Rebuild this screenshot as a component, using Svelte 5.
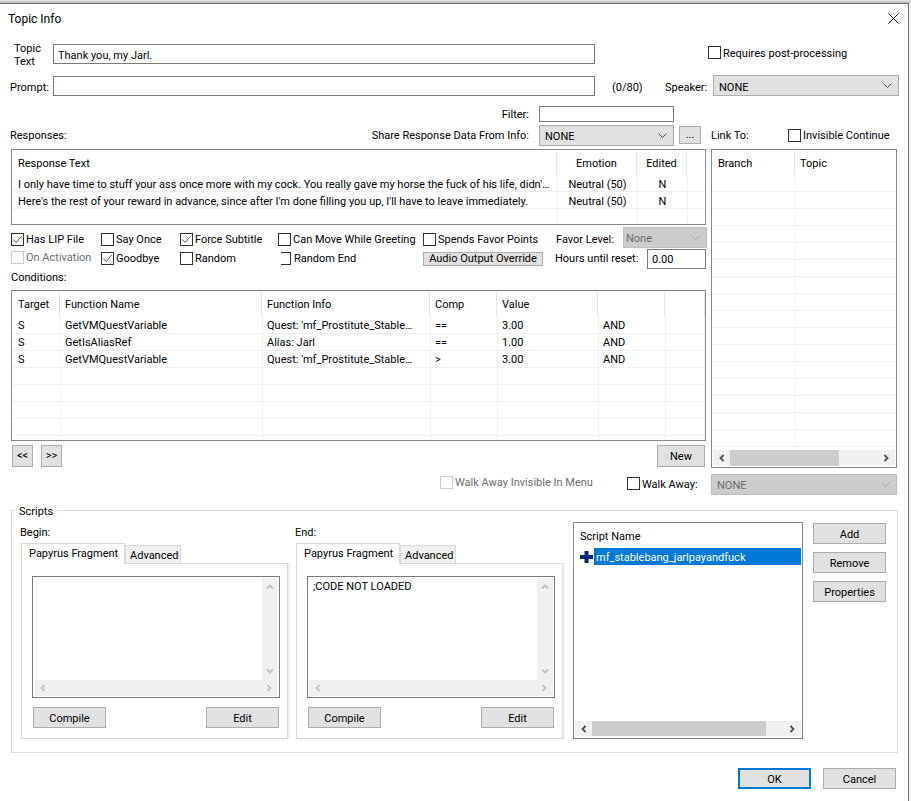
<script>
  const respRows = [
    ["I only have time to stuff your ass once more with my cock. You really gave my horse the fuck of his life, didn'…", "Neutral (50)", "N"],
    ["Here's the rest of your reward in advance, since after I'm done filling you up, I'll have to leave immediately.", "Neutral (50)", "N"],
    ["", "", ""]
  ];
  const condHead = ["Target", "Function Name", "Function Info", "Comp", "Value", "", ""];
  const condRows = [
    ["S", "GetVMQuestVariable", "Quest: 'mf_Prostitute_Stable…", "==", "3.00", "AND", ""],
    ["S", "GetIsAliasRef", "Alias: Jarl", "==", "1.00", "AND", ""],
    ["S", "GetVMQuestVariable", "Quest: 'mf_Prostitute_Stable…", ">", "3.00", "AND", ""],
    ["", "", "", "", "", "", ""],
    ["", "", "", "", "", "", ""],
    ["", "", "", "", "", "", ""],
    ["", "", "", "", "", "", ""],
    ["", "", "", "", "", "", ""]
  ];
  const linkRows = Array.from({ length: 16 }, (_, i) => i);
  const scripts = ["Begin:", "End:"];
</script>

{#snippet check(label, checked = false, disabled = false, extra = "")}
  <label class="check {extra}" class:disabled>
    <span class="box">
      {#if checked}
        <svg viewBox="0 0 13 13" width="11" height="11"><path d="M1.5 6.5 5 10l6.5-7.5" fill="none" stroke="#444" stroke-width="1.1"/></svg>
      {/if}
    </span>
    <span class="check-text">{label}</span>
  </label>
{/snippet}

{#snippet select(value, disabled = false, extra = "")}
  <div class="select {extra}" class:disabled>
    <span class="select-text">{value}</span>
    <svg viewBox="0 0 9 5" width="9" height="5"><path d="M.5.5 4.500 4.500 8.500.5" fill="none" stroke={disabled ? "#a9a9a9" : "#555"} stroke-width="1"/></svg>
  </div>
{/snippet}

{#snippet chev(dir, dark = false)}
  <svg class="chev" viewBox="0 0 8 8" width="8" height="8">
    <path
      d={dir === "l" ? "M5.500 1 2.500 4l3 3" : dir === "r" ? "M2.500 1l3 3-3 3" : dir === "u" ? "M1 5.500l3-3 3 3" : "M1 2.500l3 3 3-3"}
      fill="none" stroke={dark ? "#505050" : "#c4c4c4"} stroke-width="1.800"/>
  </svg>
{/snippet}

<div class="window">
  <header class="titlebar">
    <span>Topic Info</span>
    <svg class="close" viewBox="0 0 11 11" width="11" height="11"><path d="M.5.500l10 10M10.500.500l-10 10" stroke="#111" stroke-width="1" fill="none"/></svg>
  </header>

  <div class="row topic">
    <div class="topic-label">Topic<br />Text</div>
    <input class="field wide" value="Thank you, my Jarl." />
    {@render check("Requires post-processing", false, false, "post")}
  </div>

  <div class="row prompt">
    <div class="prompt-label">Prompt:</div>
    <input class="field wide" />
    <div class="count">(0/80)</div>
    <div class="speaker">Speaker:</div>
    {@render select("NONE", false, "speaker-select")}
  </div>

  <div class="row filter">
    <div class="filter-label">Filter:</div>
    <input class="field filter-input" />
  </div>

  <div class="split">
    <div class="left">
      <div class="row share">
        <div class="share-labels"><span>Responses:</span><span>Share Response Data From Info:</span></div>
        {@render select("NONE", false, "share-select")}
        <button class="btn dots">...</button>
      </div>

      <div class="list responses">
        <div class="head">
          <div>Response Text</div><div class="center">Emotion</div><div class="center">Edited</div><div></div>
        </div>
        {#each respRows as r}
          <div class="data">
            <div>{r[0]}</div><div class="center">{r[1]}</div><div class="center">{r[2]}</div><div></div>
          </div>
        {/each}
      </div>

      <div class="flags flags-a">
        {@render check("Has LIP File", true)}
        {@render check("Say Once")}
        {@render check("Force Subtitle", true)}
        {@render check("Can Move While Greeting")}
        {@render check("Spends Favor Points")}
        <span class="favor-label">Favor Level:</span>
        {@render select("None", true, "favor-select")}
      </div>

      <div class="flags flags-b">
        {@render check("On Activation", false, true, "raise")}
        {@render check("Goodbye", true)}
        {@render check("Random")}
        {@render check("Random End", false, false, "clipped")}
        <button class="btn audio">Audio Output Override</button>
        <span>Hours until reset:</span>
        <input class="field hours" value="0.00" />
      </div>

      <div class="conditions-label">Conditions:</div>

      <div class="list conditions">
        <div class="head">
          {#each condHead as c}<div>{c}</div>{/each}
        </div>
        {#each condRows as r}
          <div class="data">
            {#each r as c}<div>{c}</div>{/each}
          </div>
        {/each}
      </div>

      <div class="row nav">
        <button class="btn arrow">&lt;&lt;</button>
        <button class="btn arrow second">&gt;&gt;</button>
        <button class="btn new">New</button>
      </div>
    </div>

    <div class="right">
      <div class="row linkbar">
        <span class="link-to">Link To:</span>
        {@render check("Invisible Continue")}
      </div>
      <div class="list links">
        <div class="head"><div>Branch</div><div>Topic</div></div>
        {#each linkRows as i (i)}
          <div class="data"><div></div><div></div></div>
        {/each}
        <div class="hscroll links-scroll">
          {@render chev("l", true)}
          <div class="track"><div class="thumb link-thumb"></div></div>
          {@render chev("r", true)}
        </div>
      </div>
    </div>
  </div>

  <div class="row walk">
    {@render check("Walk Away Invisible In Menu", false, true, "walk-menu")}
    {@render check("Walk Away:", false, false, "walk-away")}
    {@render select("NONE", true, "walk-select")}
  </div>

  <section class="group">
    <div class="legend">Scripts</div>
    {#each scripts as title, idx}
      <div class="script-col">
        <div class="script-title">{title}</div>
        <div class="tabs">
          <div class="tab active">Papyrus Fragment</div>
          <div class="tab">Advanced</div>
        </div>
        <div class="panel">
          <div class="editor">
            <div class="editor-top">
              <div class="code">{idx === 1 ? ";CODE NOT LOADED" : ""}</div>
              <div class="vscroll">{@render chev("u")}{@render chev("d")}</div>
            </div>
            <div class="hscroll editor-h">{@render chev("l")}{@render chev("r")}</div>
          </div>
          <div class="panel-actions">
            <button class="btn std">Compile</button>
            <button class="btn std">Edit</button>
          </div>
        </div>
      </div>
    {/each}

    <div class="script-list">
      <div class="script-head">Script Name</div>
      <div class="script-item">
        <svg viewBox="0 0 13 12" width="13" height="12"><path d="M4.500 0h4v4H13v4H8.500v4h-4V8H0V4h4.500z" fill="#0a2a78"/></svg>
        <span class="selected">mf_stablebang_jarlpayandfuck</span>
      </div>
      <div class="spacer"></div>
      <div class="hscroll list-scroll">
        {@render chev("l", true)}
        <div class="track"><div class="thumb list-thumb"></div></div>
        {@render chev("r", true)}
      </div>
    </div>

    <div class="script-actions">
      <button class="btn std">Add</button>
      <button class="btn std">Remove</button>
      <button class="btn std">Properties</button>
    </div>
  </section>

  <footer class="footer">
    <button class="btn std ok">OK</button>
    <button class="btn std">Cancel</button>
  </footer>
</div>

<style>
  :global(body) {
    margin: 0;
    background: linear-gradient(#ececec, #b4b4b4 3px, #f2f2f2 3px);
    width: 911px;
    height: 801px;
    overflow: hidden;
  }
  .window {
    box-sizing: border-box;
    width: 909px;
    height: 798px;
    margin-top: 3px;
    border-top: 1px solid #6f6f6f;
    border-right: 1px solid #6f6f6f;
    background: #fff;
    color: #000;
    font: 11px/14px Roboto, "Noto Sans", sans-serif;
    overflow: hidden;
  }
  .titlebar {
    height: 40px;
    box-sizing: border-box;
    padding: 8px 9px 0 8px;
    display: flex;
    justify-content: space-between;
    font-size: 12px;
  }
  .close { margin-top: 1px; }
  .row { display: flex; align-items: center; }
  .topic { height: 20px; }
  .topic-label { width: 39px; padding-left: 14px; line-height: 13px; margin-top: 1px; }
  .wide { width: 542px; }
  .field {
    box-sizing: border-box;
    height: 20px;
    margin: 0;
    padding: 2px 4px 0;
    border: 1px solid #7a7a7a;
    border-radius: 0;
    background: #fff;
    outline: none;
    font: inherit;
    color: #000;
  }
  .check { display: flex; align-items: center; gap: 2px; white-space: nowrap; }
  .box {
    box-sizing: border-box;
    flex: none;
    display: flex;
    align-items: center;
    justify-content: center;
    width: 13px;
    height: 13px;
    border: 1px solid #333;
    background: #fff;
  }
  .check.disabled { color: #6d6d6d; }
  .check.disabled .box { border-color: #cfcfcf; }
  .check.clipped { margin-left: 3px; }
  .check.clipped .box { width: 10px; border-left: none; margin-right: 1px; }
  .check.raise { margin-top: -2px; }
  .post { margin-left: 113px; margin-top: -4px; }
  .post .check-text { padding-top: 4px; }
  .prompt { height: 21px; margin-top: 11px; }
  .prompt-label { width: 43px; padding: 4px 0 0 10px; }
  .count { width: 53px; margin-left: 17px; padding-top: 4px; }
  .speaker { width: 48px; padding-top: 4px; }
  .select {
    box-sizing: border-box;
    display: flex;
    align-items: center;
    justify-content: space-between;
    height: 21px;
    padding: 0 6px 0 5px;
    border: 1px solid #adadad;
    background: #e1e1e1;
  }
  .select-text { padding-top: 2px; }
  .select.disabled { background: #cccccc; border-color: #bfbfbf; color: #6d6d6d; }
  .speaker-select { width: 186px; }
  .speaker-select .select-text { padding-top: 4px; }
  .filter { height: 17px; margin-top: 9px; }
  .filter-label { width: 529px; text-align: right; padding-top: 2px; }
  .filter-input { width: 135px; height: 16px; margin-left: 10px; padding-top: 0; }
  .split { display: flex; margin-top: 3px; }
  .left { width: 706px; flex: none; }
  .right { width: 186px; margin-left: 5px; flex: none; }
  .share { height: 21px; }
  .share-labels { width: 519px; margin-left: 10px; display: flex; justify-content: space-between; }
  .share-select { width: 135px; margin-left: 10px; }
  .btn {
    box-sizing: border-box;
    margin: 0;
    padding: 0;
    border: 1px solid #adadad;
    border-radius: 0;
    background: #e1e1e1;
    color: #000;
    font: inherit;
  }
  .dots { width: 22px; height: 18px; margin-left: 5px; margin-top: -1px; }
  .list {
    box-sizing: border-box;
    border: 1px solid #828790;
    background: #fff;
    overflow: hidden;
    white-space: nowrap;
  }
  .head { display: grid; height: 25px; margin-top: 1px; align-items: stretch; }
  .head > div { border-right: 1px solid #e5e5e5; padding: 6px 0 0 5px; box-sizing: border-box; }
  .data { display: grid; height: 17px; box-sizing: border-box; border-bottom: 1px solid #f0f0f0; }
  .data > div {
    border-right: 1px solid #f0f0f0;
    padding-left: 4px;
    line-height: 18px;
    height: 16px;
    overflow: hidden;
    box-sizing: border-box;
  }
  .responses .data > div { line-height: 19px; }
  .head > div.center, .data > div.center { text-align: center; padding-left: 0; }
  .responses { width: 695px; height: 76px; margin: 3px 0 0 11px; }
  .responses .head { grid-template-columns: 545px 80px 50px 19px; height: 24px; }
  .responses .data { grid-template-columns: 546px 80px 50px 18px; }
  .responses .head > div:first-child, .responses .data > div:first-child { padding-left: 6px; }
  .flags { display: grid; align-items: center; margin-left: 11px; width: 696px; }
  .flags-a { height: 21px; margin-top: 2px; grid-template-columns: 90px 79px 98px 145px 133px 67px 84px; }
  .flags-a .check, .favor-label { margin-top: 4px; }
  .flags-b { height: 21px; grid-template-columns: 90px 79px 98px 145px 132px 92px 59px; margin-top: 0; }
  .favor-select { width: 84px; padding-left: 2px; }
  .audio { width: 120px; height: 14px; line-height: 12px; white-space: nowrap; }
  .hours { width: 59px; }
  .conditions-label { height: 13px; margin: 2px 0 0 11px; }
  .conditions { width: 695px; height: 151px; margin: 6px 0 0 11px; }
  .conditions .head { grid-template-columns: 48px 202px 168px 67px 101px 67px 40px; }
  .conditions .data { grid-template-columns: 49px 202px 168px 67px 101px 67px 39px; }
  .conditions .head > div:first-child, .conditions .data > div:first-child { padding-left: 6px; }
  .nav { height: 22px; margin: 4px 0 0 12px; }
  .arrow { width: 21px; height: 22px; }
  .second { margin-left: 8px; }
  .new { width: 48px; height: 22px; margin-left: 595px; padding-top: 2px; }
  .linkbar { height: 21px; }
  .link-to { width: 77px; }
  .links { position: relative; height: 319px; margin-top: 3px; }
  .links .head { grid-template-columns: 83px 101px; height: 24px; }
  .links .data { grid-template-columns: 84px 100px; }
  .links .head > div:first-child { padding-left: 6px; }
  .links .head > div:last-child { border-right: none; }
  .links .data > div:last-child { border-right: none; }
  .hscroll {
    display: flex;
    align-items: center;
    justify-content: space-between;
    background: #f0f0f0;
    height: 16px;
    box-sizing: border-box;
    padding: 0 5px;
  }
  .links-scroll { position: absolute; left: 1px; right: 1px; bottom: 1px; height: 16px; }
  .track { flex: 1; height: 100%; margin: 0 4px; }
  .thumb { height: 100%; background: #cdcdcd; }
  .link-thumb { width: 109px; }
  .walk { height: 21px; margin: 6px 0 0 440px; }
  .walk-menu { width: 187px; margin-top: -4px; }
  .walk-away { width: 84px; margin-top: -2px; }
  .walk-away .check-text { padding-top: 2px; }
  .walk-select { width: 186px; }
  .group {
    position: relative;
    display: flex;
    align-items: flex-start;
    box-sizing: border-box;
    width: 887px;
    height: 243px;
    margin: 15px 0 0 11px;
    padding-left: 9px;
    border: 1px solid #dcdcdc;
  }
  .legend {
    position: absolute;
    left: 3px;
    top: -6px;
    padding: 0 4px 0 4px;
    background: #fff;
  }
  .script-col { width: 267px; margin-right: 8px; padding-top: 14px; flex: none; }
  .script-col:nth-of-type(3) { margin-right: 10px; }
  .script-title { height: 18px; margin-left: -1px; line-height: 16px; }
  .tabs { display: flex; align-items: flex-end; height: 20px; white-space: nowrap; }
  .tab {
    box-sizing: border-box;
    height: 18px;
    padding-left: 4px;
    width: 56px;
    line-height: 20px;
    border: 1px solid #d9d9d9;
    border-bottom: none;
    background: #f0f0f0;
    position: relative;
    bottom: 0;
  }
  .tab.active {
    width: 104px;
    height: 21px;
    padding-left: 7px;
    line-height: 20px;
    background: #fff;
    margin-bottom: -1px;
    z-index: 1;
  }
  .panel {
    box-sizing: border-box;
    height: 176px;
    padding: 12px 7px 0 10px;
    border: 1px solid #d9d9d9;
    box-shadow: 2px 0 0 #f0f0f0;
  }
  .editor {
    box-sizing: border-box;
    width: 248px;
    height: 122px;
    border: 1px solid #7a7a7a;
    padding: 1px;
    display: flex;
    flex-direction: column;
  }
  .editor-top { flex: 1; display: flex; min-height: 0; }
  .code { flex: 1; padding: 2px 0 0 4px; }
  .vscroll {
    width: 16px;
    background: #f0f0f0;
    display: flex;
    flex-direction: column;
    justify-content: space-between;
    align-items: center;
    padding: 5px 0;
    box-sizing: border-box;
  }
  .panel-actions { display: flex; justify-content: space-between; padding: 9px 1px 0 1px; }
  .std { width: 73px; height: 21px; padding-top: 2px; }
  .script-list {
    box-sizing: border-box;
    width: 230px;
    height: 217px;
    margin-top: 11px;
    border: 1px solid #828790;
    padding: 1px;
    display: flex;
    flex-direction: column;
    flex: none;
  }
  .script-head { padding: 6px 0 0 5px; height: 24px; box-sizing: border-box; }
  .script-item { display: flex; align-items: center; height: 17px; padding-left: 5px; gap: 1px; }
  .selected {
    flex: 1;
    height: 17px;
    line-height: 19px;
    background: #0078d7;
    color: #fff;
    padding-left: 2px;
  }
  .spacer { flex: 1; }
  .list-scroll { height: 15px; margin-bottom: 1px; }
  .list-thumb { width: 174px; }
  .script-actions { display: flex; flex-direction: column; gap: 8px; margin: 12px 0 0 10px; flex: none; }
  .footer { display: flex; justify-content: flex-end; gap: 12px; margin-top: 15px; padding-right: 12px; }
  .ok { border: 2px solid #0078d7; }
</style>
